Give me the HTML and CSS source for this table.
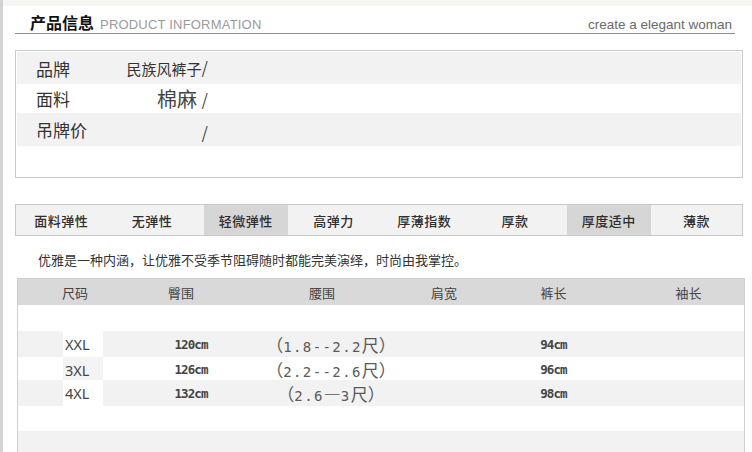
FILE: index.html
```html
<!DOCTYPE html>
<html lang="zh">
<head>
<meta charset="utf-8">
<title>产品信息</title>
<link rel="stylesheet" href="styles.css">
</head>
<body>
<div class="page">
  <div class="topband"></div>
  <div class="header">
    <div class="title"><span class="cn">产品信息</span><span class="en">PRODUCT INFORMATION</span></div>
    <div class="slogan">create a elegant woman</div>
  </div>

  <div class="info">
    <div class="info-row r1 grey"><span class="label">品牌</span><span class="value small">民族风裤子<span class="slash">/</span></span></div>
    <div class="info-row r2"><span class="label">面料</span><span class="value big">棉麻 <span class="slash">/</span></span></div>
    <div class="info-row r3 grey"><span class="label">吊牌价</span><span class="value low"><span class="slash">/</span></span></div>
    <div class="info-row r4"></div>
  </div>

  <div class="tabs">
    <div class="tab">面料弹性</div>
    <div class="tab">无弹性</div>
    <div class="tab on">轻微弹性</div>
    <div class="tab">高弹力</div>
    <div class="tab">厚薄指数</div>
    <div class="tab">厚款</div>
    <div class="tab on">厚度适中</div>
    <div class="tab">薄款</div>
  </div>

  <p class="intro">优雅是一种内涵，让优雅不受季节阻碍随时都能完美演绎，时尚由我掌控。</p>

  <div class="sizes">
    <div class="srow head">
      <div class="c1">尺码</div><div class="c2">臀围</div><div class="c3">腰围</div><div class="c4">肩宽</div><div class="c5">裤长</div><div class="c6">袖长</div>
    </div>
    <div class="srow blank h26"></div>
    <div class="srow grey h26">
      <div class="c1"><span class="sz white">XXL</span></div><div class="c2 cm">120cm</div><div class="c3 waist">（<span class="num">1.8--2.2</span>尺）</div><div class="c4"></div><div class="c5 cm">94cm</div><div class="c6"></div>
    </div>
    <div class="srow h23">
      <div class="c1"><span class="sz light">3XL</span></div><div class="c2 cm">126cm</div><div class="c3 waist">（<span class="num">2.2--2.6</span>尺）</div><div class="c4"></div><div class="c5 cm">96cm</div><div class="c6"></div>
    </div>
    <div class="srow grey h26">
      <div class="c1"><span class="sz white">4XL</span></div><div class="c2 cm">132cm</div><div class="c3 waist">（<span class="num">2.6</span>—<span class="num">3</span>尺）</div><div class="c4"></div><div class="c5 cm">98cm</div><div class="c6"></div>
    </div>
    <div class="srow h25"></div>
    <div class="srow grey h26"></div>
  </div>
</div>
</body>
</html>
```

FILE: styles.css
```css
html, body {
  margin: 0;
  padding: 0;
  background: #fff;
}
body {
  font-family: "Noto Sans CJK SC", "Noto Sans", sans-serif;
  color: #333;
  overflow: hidden;
}
.page {
  border-left: 3px solid #d3d3d3;
  height: 452px;
  box-sizing: border-box;
  padding: 0 9px 0 12px;
}
.topband {
  height: 6px;
  margin: 0 -9px 0 -12px;
  background: #f6f6f3;
}
.header {
  display: flex;
  justify-content: space-between;
  align-items: flex-end;
  height: 28px;
  box-sizing: border-box;
  margin-right: 8px;
  padding: 0 3px 0 15px;
  border-bottom: 1px solid #8c8c8c;
}
.title {
  display: flex;
  align-items: baseline;
  line-height: 16px;
}
.cn {
  font-size: 16px;
  font-weight: bold;
  color: #111;
}
.en {
  margin-left: 6px;
  font-family: "Liberation Sans", Arial, sans-serif;
  font-size: 13px;
  color: #9a9a9a;
  letter-spacing: 0.2px;
}
.slogan {
  font-family: "Liberation Sans", Arial, sans-serif;
  font-size: 13.5px;
  line-height: 16px;
  color: #6a6a6a;
}

.info {
  margin-top: 16px;
  border: 1px solid #c9c9c9;
  padding: 1px;
}
.info-row {
  display: flex;
  align-items: center;
  padding-left: 19px;
  height: 30px;
}
.info-row.grey { background: #f2f2f2; }
.r1 { height: 32px; }
.r2 { height: 29px; }
.r3 { height: 33px; }
.r4 { height: 30px; }
.label {
  width: 86px;
  font-size: 17px;
  color: #333;
}
.value {
  width: 86px;
  text-align: right;
  color: #333;
  white-space: nowrap;
}
.value.small { font-size: 15px; }
.value.big { font-size: 20px; color: #444; }
.value.low { padding-top: 6px; }
.slash {
  font-family: "DejaVu Sans", sans-serif;
  font-size: 19px;
  font-weight: 300;
  color: #333;
}

.tabs {
  margin-top: 26px;
  display: grid;
  grid-template-columns: repeat(8, 1fr);
  height: 32px;
  box-sizing: border-box;
  border: 1px solid #c9c9c9;
  background: #f2f2f2;
}
.tab {
  display: flex;
  align-items: center;
  justify-content: center;
  font-size: 13px;
  color: #2e2e2e;
  letter-spacing: 0.5px;
  font-weight: 500;
}
.tab.on {
  background: linear-gradient(to right, transparent 6px, #d6d6d6 6px);
  padding-left: 6px;
}

.intro {
  margin: 14px 0 0 23px;
  font-size: 13px;
  line-height: 20px;
  color: #333;
}

.sizes {
  margin: 8px -2px 0 2px;
  border: 1px solid #cfcfcf;
  border-bottom: none;
}
.srow {
  display: grid;
  grid-template-columns: 114px 98px 184px 60px 159px 1fr;
  align-items: center;
  font-size: 13px;
  color: #555;
}
.srow.grey { background: #f2f2f2; }
.srow.head {
  background: #d9d9d9;
  height: 26px;
  color: #444;
}
.srow.head > div {
  text-align: center;
  justify-content: center;
  align-items: center;
  padding: 0;
}
.h26 { height: 26px; }
.h23 { height: 23px; }
.h25 { height: 25px; }
.c2, .c4, .c5, .c6 { text-align: center; }
.c1 { padding-left: 45px; height: 100%; display: flex; }
.sz {
  display: flex;
  align-items: center;
  width: 38px;
  padding-left: 2px;
  font-family: "Noto Sans", sans-serif;
  font-size: 14.5px;
  color: #444;
}
.sz.white { background: #fff; }
.sz.light { background: #f4f4f4; }
.cm {
  font-family: "DejaVu Sans Mono", monospace;
  font-size: 12.5px;
  font-weight: bold;
  letter-spacing: -0.9px;
  color: #444;
}
.c2.cm { padding-left: 20px; }
.waist {
  font-size: 17px;
  color: #5a5a5a;
  text-align: center;
  padding-left: 18px;
  white-space: nowrap;
}
.num {
  font-family: "DejaVu Sans Mono", monospace;
  font-size: 14px;
  letter-spacing: 1.4px;
}
```
